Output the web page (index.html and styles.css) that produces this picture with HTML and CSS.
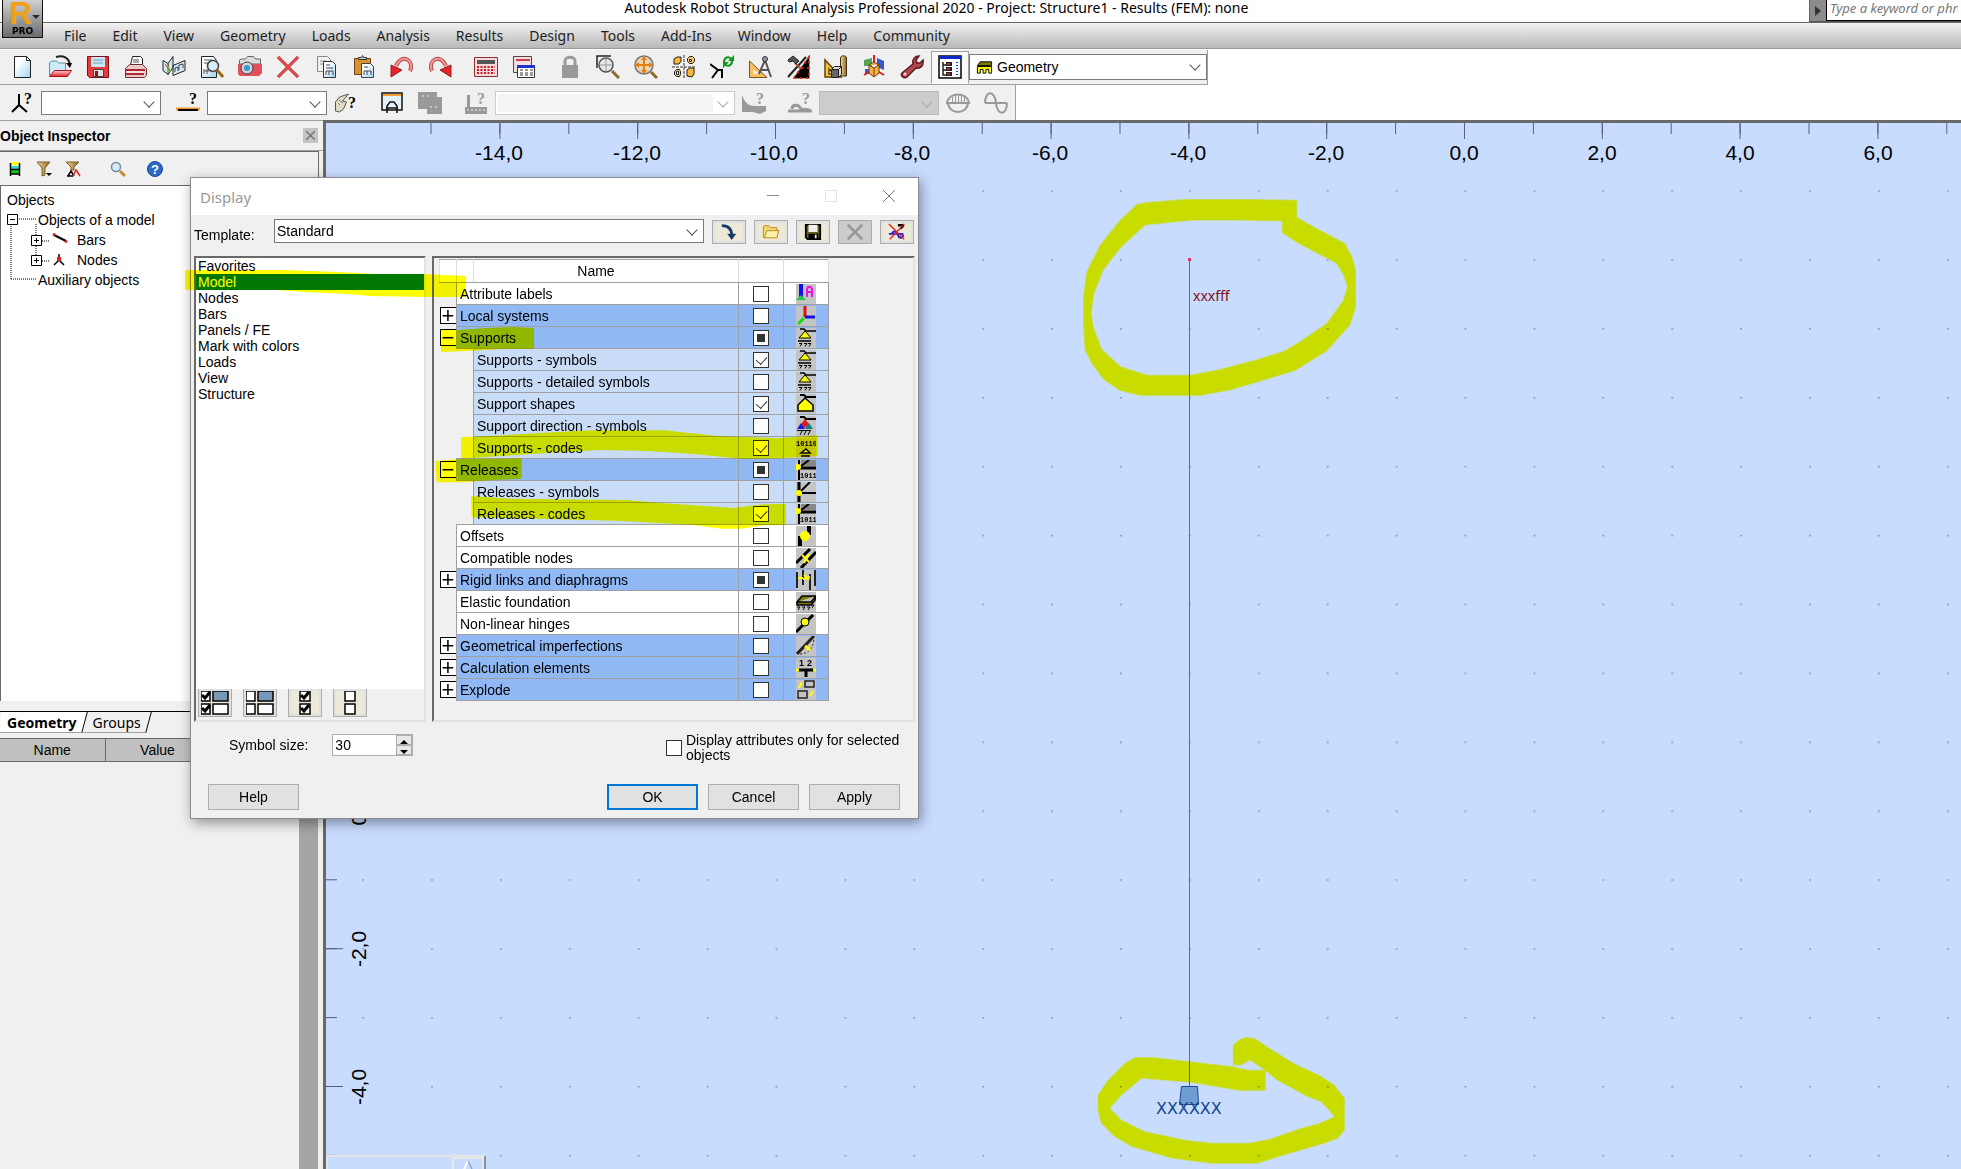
FILE: index.html
```html
<!DOCTYPE html>
<html lang="en">
<head>
  <meta charset="UTF-8">
  <meta name="viewport" content="width=device-width, initial-scale=1.0">
  <title>Autodesk Robot Structural Analysis Professional 2020</title>
  <link rel="stylesheet" href="styles.css">
</head>
<body>
  <svg class="sprite" aria-hidden="true">
    <defs>
      <linearGradient id="paper" x1="0" y1="0" x2="1" y2="1"><stop offset="0.3" stop-color="#fff"/><stop offset="1" stop-color="#9fd4f2"/></linearGradient>
      <linearGradient id="red" x1="0" y1="0" x2="0" y2="1"><stop offset="0" stop-color="#ffd0d0"/><stop offset="1" stop-color="#e02028"/></linearGradient>
      <linearGradient id="wood" x1="0" y1="0" x2="1" y2="0"><stop offset="0" stop-color="#f3dba0"/><stop offset="1" stop-color="#8a6420"/></linearGradient>
    </defs>
    <symbol id="support" viewBox="0 0 20 20">
      <path fill="#c4c4c4" d="M0 0h20v20H0z"/><path fill="none" stroke="#000" stroke-width="1.500" d="M4 1h4l2 2h10"/>
      <path fill="#ff0" stroke="#000" d="M9 3l6 7H3z"/><path stroke="#000" stroke-width="1.500" d="M2 13h13"/>
      <path fill="none" stroke="#000" d="M3 15.500h3l-2 3M8 15.500h3l-2 3M12 15.500h3l-2 3"/>
    </symbol>
    <symbol id="release" viewBox="0 0 20 20">
      <path fill="#c4c4c4" d="M0 0h20v20H0z"/><path stroke="#000" stroke-width="3" d="M3 0v20"/>
      <path stroke="#000" stroke-width="2" d="M4 11h16M4 10L14 0"/><circle cx="3" cy="11" r="3" fill="#ff0"/>
    </symbol>
    <symbol id="release-code" viewBox="0 0 20 20">
      <path fill="#c4c4c4" d="M0 0h20v20H0z"/><path fill="#888" d="M5 0h15v6H5z"/><path stroke="#000" stroke-width="2" d="M3 0v20M4 7L13 0"/><path stroke="#000" stroke-width="3" d="M4 8h16"/>
      <circle cx="2" cy="7" r="3" fill="#ff0"/><text x="4" y="18" class="icon-code">1011</text>
    </symbol>
  </svg>

  <div class="app">
    <header class="titlebar">
      <h1>Autodesk Robot Structural Analysis Professional 2020 - Project: Structure1 - Results (FEM): none</h1>
      <div class="search">
        <button class="search-toggle" aria-label="Collapse search"><svg width="6" height="10"><path d="M0 0l6 5-6 5z" fill="#333"/></svg></button>
        <input type="text" aria-label="Search" placeholder="Type a keyword or phrase">
      </div>
      <button class="app-button" aria-label="Application menu">
        <span class="app-letter">R</span>
        <svg width="8" height="4"><path d="M0 0h8L4 4z" fill="#222c38"/></svg>
        <span class="app-edition">PRO</span>
      </button>
    </header>

    <nav class="menubar">
      <a href="#">File</a><a href="#">Edit</a><a href="#">View</a><a href="#">Geometry</a><a href="#">Loads</a><a href="#">Analysis</a><a href="#">Results</a><a href="#">Design</a><a href="#">Tools</a><a href="#">Add-Ins</a><a href="#">Window</a><a href="#">Help</a><a href="#">Community</a>
    </nav>

    <div class="toolbars">
      <div class="toolbar">
        <button class="tool" aria-label="New"><svg viewBox="0 0 24 24"><path fill="url(#paper)" stroke="#222" d="M4.500 1.500h12l4 4v17h-16zM16.500 1.500v4h4"/></svg></button>
        <button class="tool" aria-label="Open"><svg viewBox="0 0 24 24"><path fill="#cfeaf8" stroke="#5590b0" d="M1.500 20V8l2-2h5l2 2h7v12z"/><path fill="url(#red)" stroke="#b01018" d="M1.500 21.500l5-6h17l-4 6z"/><path fill="none" stroke="#222" stroke-width="2" d="M8 2c7-2 12 0 14 7"/><path d="M18 8h6l-2 5z"/></svg></button>
        <button class="tool" aria-label="Save"><svg viewBox="0 0 24 24"><path fill="#e83840" stroke="#801018" d="M1.500 1.500h21v21h-19l-2-2z"/><path fill="#c8e8f4" d="M5 2h14v10H5z"/><path stroke="#68a0b0" d="M7 5h10M7 8h10"/><path fill="#ddd" stroke="#444" d="M7.500 14.500h10v7h-10z"/><path fill="#702020" d="M9 16h3v5H9z"/></svg></button>
        <button class="tool" aria-label="Print"><svg viewBox="0 0 24 24"><path fill="#fff" stroke="#222" d="M6.500 10l2-8.500h8l2 2V10z"/><path stroke="#555" d="M9 5h6M9 7h6"/><path fill="#e8c8c8" stroke="#703030" d="M1.500 13.500l4-4h13l4 4v7l-2 2h-19z"/><path stroke="#b02830" stroke-width="2" d="M2 15h19M2 19h18"/><path stroke="#fff" d="M3 17h16"/></svg></button>
        <button class="tool" aria-label="Preview"><svg viewBox="0 0 24 24"><path fill="#d4e8f4" stroke="#222" d="M1 5.500l5 3v11l-5-4zM6 8.500l5-7v11l-5 7zM11 20.500l12-5v-10l-12 5z"/><path fill="#70c840" d="M5 8l4 8-4 3z"/><path stroke="#e04040" d="M3 9l5 7"/><path fill="none" stroke="#345" d="M13 17v-4l3-1v4M17 15v-5l4-1v4"/></svg></button>
        <button class="tool" aria-label="Print composition"><svg viewBox="0 0 24 24"><path fill="url(#paper)" stroke="#222" d="M1.500 1.500h12l3 4v17h-15z"/><path stroke="#555" d="M4 5h8M4 8h5M4 14v5M7 14v5M4 16h5"/><circle cx="13" cy="11" r="5.500" fill="#d8eef8" stroke="#444" stroke-width="1.500"/><path stroke="#a06820" stroke-width="3" d="M17 15l6 7"/></svg></button>
        <button class="tool" aria-label="Screen capture"><svg viewBox="0 0 24 24"><path fill="#ddd" stroke="#666" d="M3.500 4h4l2-2.500h6l2 2.500h5v5h-21V5z"/><path fill="#e05058" d="M0 9h24v9l-3 3H2l-2-2z"/><circle cx="9" cy="13" r="6" fill="#d0d4d8" stroke="#444"/><circle cx="9" cy="13" r="3" fill="#3898d0"/></svg></button>
        <button class="tool" aria-label="Delete"><svg viewBox="0 0 24 24"><path stroke="#902020" stroke-width="3" d="M2 2l20 20M22 2L2 22"/><path stroke="#f04848" stroke-width="2" d="M2 2l20 20M22 2L2 22"/></svg></button>
        <button class="tool" aria-label="Copy"><svg viewBox="0 0 24 24"><path fill="#f0f0f0" stroke="#888" d="M3.500 1.500h10l3 3v12h-13zM6 6h6M6 9h6"/><path fill="url(#paper)" stroke="#333" d="M9.500 6.500h9l3 3v13h-12z"/><path fill="none" stroke="#445" d="M12 10h4M12 13h7M12 20v-4h7v4M15 16v4"/></svg></button>
        <button class="tool" aria-label="Paste"><svg viewBox="0 0 24 24"><path fill="#d89030" stroke="#704010" d="M2.500 3.500h16v16h-16z"/><path fill="#ccc" stroke="#333" d="M6.500 4.500v-2h3l1-2 1 2h3v2z"/><path fill="url(#paper)" stroke="#444" d="M9.500 8.500h9l3 3v11h-12z"/><path fill="none" stroke="#445" d="M12 12h4M12 20v-4h7v4M15 16v4"/></svg></button>
        <button class="tool" aria-label="Undo"><svg viewBox="0 0 24 24"><path fill="none" stroke="#a05050" stroke-width="4" d="M20 16c5-10-8-19-14-5"/><path fill="none" stroke="#ff9090" stroke-width="2" d="M20 16c5-10-8-19-14-5"/><path fill="#e82028" stroke="#902020" d="M1 10l11 5-11 7z"/></svg></button>
        <button class="tool" aria-label="Redo"><svg viewBox="0 0 24 24"><path fill="none" stroke="#a05050" stroke-width="4" d="M4 16c-5-10 8-19 14-5"/><path fill="none" stroke="#ff9090" stroke-width="2" d="M4 16c-5-10 8-19 14-5"/><path fill="#e82028" stroke="#902020" d="M23 10l-11 5 11 7z"/></svg></button>
        <button class="tool gap" aria-label="Calculate"><svg viewBox="0 0 24 24"><path fill="#f8d8d8" stroke="#903030" d="M.500 2.500h23v19H.500z"/><path fill="#555" d="M3 5h18v4H3z"/><path stroke="#c02028" stroke-width="2" stroke-dasharray="2 1.500" d="M3 12h18M3 15h18M3 18h18"/></svg></button>
        <button class="tool" aria-label="Calculation report"><svg viewBox="0 0 24 24"><path fill="#f0e0e0" stroke="#604040" d="M1.500 1.500h18v16h-18z"/><path fill="#d04048" d="M4 4h14v2H4z"/><path fill="#fff" stroke="#333" d="M5.500 10.500h17v12h-17z"/><path fill="#2030d0" d="M5 10h18v3H5z"/><path stroke="#333" stroke-dasharray="3 2" d="M8 15h13M8 18h13M8 20h13"/></svg></button>
        <button class="tool gap" aria-label="Lock"><svg viewBox="0 0 24 24"><path fill="none" stroke="#999" stroke-width="3" d="M7 12V6c0-5 10-5 10 0v6"/><path fill="#999" d="M4 10h16v13H4z"/></svg></button>
        <button class="tool" aria-label="Zoom window"><svg viewBox="0 0 24 24"><path fill="none" stroke="#222" stroke-width="1.500" d="M1 13V1h14"/><circle cx="10" cy="10" r="7" fill="#e4e8ea" stroke="#555" stroke-width="1.500"/><path stroke="#999" d="M10 4v12M4 10h12"/><path stroke="#906828" stroke-width="3" d="M16 16l7 7"/></svg></button>
        <button class="tool" aria-label="Zoom all"><svg viewBox="0 0 24 24"><circle cx="10" cy="10" r="9" fill="#e8d8b8" stroke="#777" stroke-width="1.500"/><path stroke="#e88010" stroke-width="2" d="M10 2v16M2 10h16"/><path fill="#e88010" d="M10 1l3 4H7zM10 19l3-4H7zM1 10l4-3v6zM19 10l-4-3v6z"/><path stroke="#906828" stroke-width="3" d="M17 17l6 6"/></svg></button>
        <button class="tool" aria-label="View manager"><svg viewBox="0 0 24 24"><path stroke="#333" stroke-dasharray="3 1" d="M12 0v24M0 12h24"/><path fill="#f8b838" stroke="#222" d="M2 9V4l3-2h4v4L7 9zM15 21v-6l3-2h4v6l-2 3z"/><path fill="#f8c868" stroke="#222" d="M15.500 3.500l2-2h3l2 2v3l-2 2h-3l-2-2zM2.500 16.500l2-2h3l1 2v3l-1 2h-3l-2-2z"/><path fill="#fff" stroke="#222" d="M17.500 4.500h2v2h-2zM4.500 16.500h2v3h-2z"/></svg></button>
        <button class="tool" aria-label="Refresh view"><svg viewBox="0 0 24 24"><path fill="none" stroke="#000" stroke-width="2" d="M0 9l8 6h5M8 15L2 23M12 15v8"/><path fill="none" stroke="#109820" stroke-width="2" d="M14 7c0-5 5-6 7-3M22 6c0 5-5 6-7 3"/><path fill="#109820" d="M24 0v6h-6zM13 13V7h6z"/></svg></button>
        <button class="tool" aria-label="Dimension"><svg viewBox="0 0 24 24"><path fill="#f8c060" stroke="#805020" d="M1.500 6v16.500H19z"/><path fill="#eee" d="M5 14v5h6z"/><path fill="none" stroke="#555" stroke-width="2" d="M17 5l-6 14M17 5l6 17M12 15h9"/><circle cx="17" cy="4" r="2.500" fill="#999" stroke="#333"/></svg></button>
        <button class="tool" aria-label="Edit structure"><svg viewBox="0 0 24 24"><path fill="#fff" stroke="#a08050" stroke-width="1.500" d="M8 23L23 2v21zM15 13h8M15 13v10"/><path stroke="#e02020" stroke-width="2" stroke-dasharray="2 4" d="M8 23L23 2v21H8M15 13h8"/><path stroke="#222" stroke-width="2" d="M2 22L20 2"/><path stroke="#b05030" stroke-width="2" d="M9 8l6 6"/><path fill="#555" stroke="#222" d="M2 5l5-4 6 5-3 3-3-3-4 1z"/></svg></button>
        <button class="tool" aria-label="Section database"><svg viewBox="0 0 24 24"><path fill="#f8c838" stroke="#604010" stroke-width="1.500" d="M1 5v17h16zM5 14l5 5H5z"/><path fill="url(#wood)" stroke="#443010" d="M16.500 3v18h6V3c0-3-6-3-6 0z"/><path fill="#ddd" stroke="#222" d="M7.500 14.500h7v8h-7zM7.500 14.500l3-3h7v8l-3 3M14.500 14.500l3-3"/><path fill="#666" d="M8 15h6v7H8z"/></svg></button>
        <button class="tool" aria-label="Attributes"><svg viewBox="0 0 24 24"><path fill="#58a058" d="M2 5l8-2v8H2z"/><path fill="#3858c8" d="M15 3l7 3v9l-7-3zM3 14h6v5H3z"/><path stroke="#e02020" stroke-width="2" d="M12 0v10M2 20l10-6M22 20l-10-6"/><path fill="#f8b040" stroke="#704010" d="M7 10l5-3 5 3v8l-5 4-5-4zM7 10l5 3 5-3M12 13v9"/></svg></button>
        <button class="tool" aria-label="Preferences"><svg viewBox="0 0 24 24"><path fill="#b04850" stroke="#601820" stroke-width="1.500" d="M2 18L13 9c-1-5 2-8 6-8l-3 4 1 3h3l3-3c1 6-3 9-7 8L7 22c-3 2-7-1-5-4z"/><circle cx="5" cy="19" r="1.500" fill="#f4d8d8"/></svg></button>
        <button class="tool active" aria-label="Object inspector"><svg viewBox="0 0 24 24"><path fill="#fff" stroke="#000" stroke-width="1.500" d="M1 1h22v22H1z"/><path fill="#1028c8" d="M1 1h22v3H1z"/><path fill="none" stroke="#222" stroke-width="1.500" d="M5 7v13h5M5 10h6M5 15h6"/><path stroke="#222" stroke-width="4" d="M8 9h6M8 14h6M8 19h6"/><path stroke="#d02020" stroke-width="2" d="M9 9h3M9 14h3M9 19h3"/><path stroke="#2038c8" stroke-width="2" stroke-dasharray="1 2" d="M19 7v15"/></svg></button>
        <span class="combo layout-combo">
          <svg viewBox="0 0 18 18"><path fill="#807800" stroke="#000" d="M1.500 7.500l3-4h12v4z"/><path fill="#ff0" stroke="#000" d="M1.500 8.500h15v7h-3v-4h-3v4h-3v-4h-3v4h-3z"/></svg>
          <select aria-label="Layout"><option>Geometry</option></select>
        </span>
      </div>

      <div class="toolbar second">
        <button class="tool" aria-label="Select nodes"><svg viewBox="0 0 24 24"><path fill="none" stroke="#000" stroke-width="2" d="M9 3v11L2 21M9 14l8 7"/><text x="14" y="13" class="icon-mark">?</text></svg></button>
        <span class="combo"><select aria-label="Node selection"><option></option></select></span>
        <button class="tool gap" aria-label="Select bars"><svg viewBox="0 0 24 24"><path stroke="#f89828" stroke-width="3" d="M0 18h24"/><path stroke="#000" stroke-width="2" d="M2 19h20"/><text x="13" y="13" class="icon-mark">?</text></svg></button>
        <span class="combo"><select aria-label="Bar selection"><option></option></select></span>
        <button class="tool" aria-label="Select objects"><svg viewBox="0 0 24 24"><path fill="#e0dcc8" stroke="#555" d="M1.500 20V11l4-5 9-3-6 7 4 1-3 7-4 3z"/><path stroke="#777" d="M4 12l2 2M5 9l4 3"/><text x="14" y="17" class="icon-mark">?</text></svg></button>
        <button class="tool gap" aria-label="Edit in window"><svg viewBox="0 0 24 24"><path fill="#e4f2fa" stroke="#111" stroke-width="1.500" d="M2 2h20v17H2z"/><path fill="#f8a030" d="M3 3h18v2H3z"/><path fill="none" stroke="#111" stroke-width="1.500" d="M7 22v-7l3-4h4l3 4v7M6 17h12"/></svg></button>
        <button class="tool" aria-label="Load types" disabled><svg viewBox="0 0 24 24"><path fill="#999" d="M0 1h19v5h5v17H9v-5H0z"/><path stroke="#eee" stroke-dasharray="2 3" d="M4 5h9M12 16h8"/></svg></button>
        <button class="tool gap" aria-label="Select case" disabled><svg viewBox="0 0 24 24"><path fill="#999" d="M3 4h3v12h17v7H1v-7h2z"/><path stroke="#eee" stroke-dasharray="2 2" d="M3 19h18"/><text x="13" y="13" class="icon-mark off">?</text></svg></button>
        <span class="combo wide"><select aria-label="Load case" disabled><option></option></select></span>
        <button class="tool" aria-label="Select mode" disabled><svg viewBox="0 0 24 24"><path fill="#999" d="M0 4c3 8 6 11 14 11h10v5l-6 3-7-2H0z"/><text x="14" y="13" class="icon-mark off">?</text></svg></button>
        <button class="tool gap" aria-label="Select component" disabled><svg viewBox="0 0 24 24"><path fill="none" stroke="#999" stroke-width="3" d="M0 20h24M4 18c0-5 7-5 9 0l9 1"/><text x="14" y="13" class="icon-mark off">?</text></svg></button>
        <span class="combo filled"><select aria-label="Mode" disabled><option></option></select></span>
        <button class="tool" aria-label="Diagram" disabled><svg viewBox="0 0 24 24"><path fill="none" stroke="#999" stroke-width="2" d="M1 11C4 1 20 1 23 11M0 12h24M2 12c1 12 19 12 20 0"/><path fill="none" stroke="#999" d="M6.500 6v6M9.500 4v8M12.500 4v8M15.500 4v8M18.500 6v6"/></svg></button>
        <button class="tool" aria-label="Wave" disabled><svg viewBox="0 0 24 24"><path fill="none" stroke="#999" stroke-width="2" d="M1 12h22M1 12c0-13 10-13 11 0s11 13 11 0"/></svg></button>
      </div>
    </div>

    <main class="workspace">
      <aside class="inspector">
        <div class="inspector-head">
          <h2>Object Inspector</h2>
          <button class="close" aria-label="Close inspector"><svg width="9" height="9"><path stroke="#777" stroke-width="1.500" d="M0 0l9 9M9 0L0 9"/></svg></button>
        </div>
        <div class="inspector-tools">
          <button aria-label="Storeys"><svg viewBox="0 0 16 16"><path fill="#ff0" d="M4 1h8v3H4z"/><path fill="#30d8d0" d="M4 5h8v3H4z"/><path fill="#10c820" d="M4 9h8v4H4z"/><path fill="none" stroke="#000" stroke-width="1.500" d="M3.500 15V2M12.500 15V2M3 8.500h10M3 13h10"/></svg></button>
          <button aria-label="Filter"><svg viewBox="0 0 16 16"><path fill="url(#wood)" stroke="#806020" d="M1 1h13L9 7v7l-3 1V7z"/><path d="M10 12h6l-3 3z"/></svg></button>
          <button aria-label="Filter structure"><svg viewBox="0 0 16 16"><path fill="url(#wood)" stroke="#806020" d="M1 1h13L9 6v3H6V6z"/><path fill="none" stroke="#000" stroke-width="1.500" d="M2 15h6M3 15l3-5 3 5"/><path fill="none" stroke="#e82020" stroke-width="1.500" d="M8 15l3-6 4 6"/></svg></button>
          <button class="find" aria-label="Find"><svg viewBox="0 0 16 16"><circle cx="6" cy="6" r="4.500" fill="#d8ecf8" stroke="#7088a8" stroke-width="1.500"/><path stroke="#c09030" stroke-width="3" d="M10 10l5 5"/></svg></button>
          <button class="help" aria-label="Help"><svg viewBox="0 0 16 16"><circle cx="8" cy="8" r="7.500" fill="#2c68c8" stroke="#184890"/><text x="8" y="13" text-anchor="middle" class="icon-help">?</text></svg></button>
        </div>
        <div class="tree">
          <p>Objects</p>
          <svg class="tree-lines" width="70" height="90">
            <path class="dots" d="M15 15h21M11 20v55M11 75h25M36 20v35M42 37h8M42 57h8"/>
            <path class="box" d="M7.500 10.500h10v10h-10zM31.500 31.500h10v10h-10zM31.500 51.500h10v10h-10z"/>
            <path class="sign" d="M10 15.500h5M34 36.500h5M36.500 34v5M34 56.500h5M36.500 54v5"/>
            <path stroke="#000" stroke-width="2" d="M54 31l12 6"/><path stroke="#e02020" stroke-width="3" d="M53 30l2 1M65 37l2 1"/>
            <path fill="none" stroke="#000" stroke-width="1.500" d="M59 50v6l-5 5M59 56l5 5"/><path fill="#e02020" d="M57 53h4v4h-4z"/>
          </svg>
          <ul>
            <li>Objects of a model
              <ul><li>Bars</li><li>Nodes</li></ul>
            </li>
            <li>Auxiliary objects</li>
          </ul>
        </div>
        <div class="tabs">
          <button class="tab current">Geometry</button>
          <button class="tab">Groups</button>
        </div>
        <div class="properties">
          <table>
            <thead><tr><th>Name</th><th>Value</th><th></th></tr></thead>
          </table>
          <div class="side-strip"></div>
        </div>
      </aside>

      <section class="viewport">
        <svg class="canvas" width="100%" height="100%">
          <defs>
            <pattern id="grid" patternUnits="userSpaceOnUse" x="1464.500" y="1086" width="68.900" height="68.900"><path fill="#9090ec" d="M0 0h2v1.500H0z"/></pattern>
            <pattern id="minor" patternUnits="userSpaceOnUse" x="1464" y="123" width="68.900" height="20"><path fill="#56607a" d="M0 0h1v11H0z"/></pattern>
            <pattern id="major" patternUnits="userSpaceOnUse" x="1464" y="123" width="137.800" height="20"><path fill="#56607a" d="M0 0h1v16H0z"/></pattern>
            <pattern id="minor-y" patternUnits="userSpaceOnUse" x="326" y="1086" width="20" height="68.900"><path fill="#56607a" d="M0 0h11v1H0z"/></pattern>
            <pattern id="major-y" patternUnits="userSpaceOnUse" x="326" y="1086" width="20" height="137.800"><path fill="#56607a" d="M0 0h17v1H0z"/></pattern>
          </defs>
          <g transform="translate(-326 -123)">
            <rect x="326" y="180" width="4000" height="3000" fill="url(#grid)"/>
            <rect x="400" y="123" width="4000" height="20" fill="url(#minor)"/>
            <rect x="400" y="123" width="4000" height="20" fill="url(#major)"/>
            <rect x="326" y="820" width="20" height="340" fill="url(#minor-y)"/>
            <rect x="326" y="820" width="20" height="340" fill="url(#major-y)"/>
            <g class="ruler">
              <text x="499" y="160">-14,0</text><text x="637" y="160">-12,0</text><text x="774" y="160">-10,0</text><text x="912" y="160">-8,0</text><text x="1050" y="160">-6,0</text><text x="1188" y="160">-4,0</text><text x="1326" y="160">-2,0</text><text x="1464" y="160">0,0</text><text x="1602" y="160">2,0</text><text x="1740" y="160">4,0</text><text x="1878" y="160">6,0</text>
              <text transform="translate(366 811) rotate(-90)">0,0</text>
              <text transform="translate(366 949) rotate(-90)">-2,0</text>
              <text transform="translate(366 1087) rotate(-90)">-4,0</text>
            </g>
            <path fill="#709cd4" stroke="#1c4890" d="M1181.500 1086.500h16l1 18h-19z"/>
            <path stroke="#66707c" d="M1189.500 260v826"/>
            <path fill="#e03070" d="M1188 258h3v3h-3z"/>
            <text class="free-code" x="1193" y="301">xxxfff</text>
            <text class="support-code" x="1156" y="1114">XXXXXX</text>
            <g class="marker">
              <path transform="translate(1060 180) scale(.3333)" d="M230 73L260 67 370 58H567L711 60V112L760 140 855 190 878 235 888 275V380L870 435 800 513 705 572 590 607 510 630 420 647H240L180 632 130 598 95 550 75 510 70 440V350L80 275 120 195 180 120zM255 135L395 121H543L666 123V158L710 187 760 214 830 250 850 285 862 320 850 360 800 430 720 485 670 514 590 539 480 568 390 585H262L182 560 125 508 100 440 94 400 102 340 130 270 180 205z"/>
              <path transform="translate(300 1020) scale(.6761 .3333)" d="M1380 135V75L1390 58 1400 52 1412 55 1430 80 1470 130 1510 168 1530 195 1545 235V330L1535 355 1515 370 1460 402 1415 431H1350L1290 415 1230 380 1205 350 1185 310 1180 270V225L1195 180 1220 130 1235 112H1263L1310 123 1380 140 1403 150H1427L1405 120 1392 135zM1245 175L1320 188 1390 212H1428V152L1445 180 1490 230 1510 245 1522 270 1530 290 1508 310 1480 325 1433 358 1403 369H1350L1310 360 1250 335 1215 300 1198 265 1215 225z"/>
            </g>
          </g>
        </svg>
        <div class="corner-panel"><button aria-label="Expand"><svg width="20" height="16"><path fill="none" stroke="#fff" stroke-width="2" d="M3 16L10 2"/><path fill="none" stroke="#7888a8" d="M10 2l7 14"/></svg></button></div>
      </section>
    </main>

    <div class="dialog" role="dialog" aria-labelledby="dialog-title">
      <div class="dialog-head">
        <h2 id="dialog-title">Display</h2>
        <button aria-label="Minimize"><svg width="12" height="12"><path stroke="#888" d="M0 5.500h12"/></svg></button>
        <button aria-label="Maximize" disabled><svg width="12" height="12"><path fill="none" stroke="#e4e4e4" d="M.500.500h11v11H.500z"/></svg></button>
        <button aria-label="Close"><svg width="12" height="12"><path stroke="#777" d="M0 0l12 12M12 0L0 12"/></svg></button>
      </div>

      <div class="template-row">
        <label for="template">Template:</label>
        <span class="combo"><select id="template"><option>Standard</option></select></span>
        <button class="icon-button" aria-label="Apply template"><svg viewBox="0 0 20 20"><path fill="none" stroke="#183868" stroke-width="3" d="M2 3c8 0 11 4 11 11"/><path fill="#183868" d="M8 12h10l-5 7z"/></svg></button>
        <button class="icon-button" aria-label="Open template"><svg viewBox="0 0 20 20"><path fill="#f4d470" stroke="#b88820" d="M1.500 16V4l1-1h5l2 2h7v3h2l-2 8z"/><path fill="#fff0a8" stroke="#b88820" d="M2.500 16.500l3-8h13l-2 8z"/></svg></button>
        <button class="icon-button" aria-label="Save template"><svg viewBox="0 0 20 20"><path fill="#686018" stroke="#000" stroke-width="2" d="M2 2h16v16H4l-2-2z"/><path fill="#f0f0f0" d="M5 2h10v8H5z"/><path d="M5 12h11v6H5z"/><path fill="#eee" d="M12 13h2v4h-2z"/></svg></button>
        <button class="icon-button" aria-label="Delete template" disabled><svg viewBox="0 0 20 20"><path stroke="#999" stroke-width="3" d="M2 2l16 16M18 2L2 18"/></svg></button>
        <button class="icon-button" aria-label="Clear display"><svg viewBox="0 0 20 20"><path d="M11 1h7v3l-3 3h-2l2-3h-4z"/><path fill="none" stroke="#2020d8" stroke-width="2" d="M1 12h16M4 12c2-4 6-3 7 1s5 5 6 0"/><path stroke="#e82020" stroke-width="1.500" d="M1 1l17 17M18 1L2 18"/></svg></button>
      </div>

      <div class="panes">
        <div class="pane list-pane">
          <ul class="categories">
            <li>Favorites</li><li class="selected">Model</li><li>Nodes</li><li>Bars</li><li>Panels / FE</li><li>Mark with colors</li><li>Loads</li><li>View</li><li>Structure</li>
          </ul>
          <div class="list-buttons">
            <button class="icon-button" aria-label="Select group"><svg viewBox="0 0 28 24"><path fill="#7898b8" stroke="#000" stroke-width="1.500" d="M12 0h15v10H12z"/><path fill="#fff" stroke="#000" stroke-width="1.500" d="M0 0h9v10H0zM0 13h9v10H0zM12 13h15v10H12z"/><path fill="none" stroke="#000" stroke-width="3" d="M1 4l3 3 5-6M1 17l3 3 5-6"/></svg></button>
            <button class="icon-button" aria-label="Clear group"><svg viewBox="0 0 28 24"><path fill="#7898b8" stroke="#000" stroke-width="1.500" d="M12 0h15v10H12z"/><path fill="#fff" stroke="#000" stroke-width="1.500" d="M0 0h9v10H0zM0 13h9v10H0zM12 13h15v10H12z"/></svg></button>
            <button class="icon-button" aria-label="Select all"><svg viewBox="0 0 28 24"><path fill="#fff" stroke="#000" stroke-width="1.500" d="M9 0h10v10H9zM9 13h10v10H9z"/><path fill="none" stroke="#000" stroke-width="3" d="M10 4l3 3 5-6M10 17l3 3 5-6"/></svg></button>
            <button class="icon-button" aria-label="Clear all"><svg viewBox="0 0 28 24"><path fill="#fff" stroke="#000" stroke-width="1.500" d="M9 0h10v10H9zM9 13h10v10H9z"/></svg></button>
          </div>
        </div>

        <div class="pane table-pane">
          <table class="attributes">
            <colgroup><col class="c-box"><col class="c-box"><col class="c-name"><col class="c-check"><col class="c-check"></colgroup>
            <thead><tr><th></th><th></th><th>Name</th><th></th><th></th></tr></thead>
            <tbody>
              <tr><td></td><td colspan="2">Attribute labels</td><td><input type="checkbox" aria-label="Attribute labels"></td><td><svg viewBox="0 0 20 20"><path fill="#c4c4c4" d="M0 0h20v20H0z"/><path stroke="#1010e8" stroke-width="4" d="M5 0v13"/><path fill="#20c840" d="M5 11l5 5H0z"/><path fill="none" stroke="#f010e8" stroke-width="2" d="M11 13V5l1-2h3l1 2v8M11 8h5"/></svg></td></tr>
              <tr class="parent"><td><button class="expander">+</button></td><td colspan="2">Local systems</td><td><input type="checkbox" aria-label="Local systems"></td><td><svg viewBox="0 0 20 20"><path fill="#c4c4c4" d="M0 0h20v20H0z"/><path stroke="#e01010" stroke-width="3" d="M9 0v11"/><path stroke="#1010e0" stroke-width="3" d="M9 11h10"/><path stroke="#10e010" stroke-width="3" d="M8 12l-6 6"/></svg></td></tr>
              <tr class="parent"><td><button class="expander">−</button></td><td colspan="2">Supports</td><td><input type="checkbox" class="partial" aria-label="Supports"></td><td><svg><use href="#support"/></svg></td></tr>
              <tr class="child"><td></td><td></td><td>Supports - symbols</td><td><input type="checkbox" checked aria-label="Supports - symbols"></td><td><svg><use href="#support"/></svg></td></tr>
              <tr class="child"><td></td><td></td><td>Supports - detailed symbols</td><td><input type="checkbox" aria-label="Supports - detailed symbols"></td><td><svg><use href="#support"/></svg></td></tr>
              <tr class="child"><td></td><td></td><td>Support shapes</td><td><input type="checkbox" checked aria-label="Support shapes"></td><td><svg viewBox="0 0 20 20"><path fill="#c4c4c4" d="M0 0h20v20H0z"/><path fill="none" stroke="#000" stroke-width="2" d="M4 1h4l2 2h10"/><path fill="#ff0" stroke="#000" stroke-width="1.500" d="M9 4l8 7v6H2v-6z"/></svg></td></tr>
              <tr class="child"><td></td><td></td><td>Support direction - symbols</td><td><input type="checkbox" aria-label="Support direction - symbols"></td><td><svg viewBox="0 0 20 20"><path fill="#c4c4c4" d="M0 0h20v20H0z"/><path fill="none" stroke="#000" stroke-width="2" d="M4 1h4l2 2h10"/><path fill="#e01818" d="M9 3l4 5-4 4-4-4z"/><path fill="#1818e0" d="M5 7l4 6H1z"/><path fill="#108080" d="M13 7l4 6H9z"/><path fill="none" stroke="#000" d="M1 14.500h14M6 15l-2 4M10 15l-2 4M14 15l-2 4"/></svg></td></tr>
              <tr class="child"><td></td><td></td><td>Supports - codes</td><td><input type="checkbox" checked aria-label="Supports - codes"></td><td><svg viewBox="0 0 20 20"><path fill="#c4c4c4" d="M0 0h20v20H0z"/><text x="0" y="8" class="icon-code">10110</text><path fill="#ff0" stroke="#000" stroke-width="1.500" d="M10 11l4 4H5zM5 18h9"/></svg></td></tr>
              <tr class="parent"><td><button class="expander">−</button></td><td colspan="2">Releases</td><td><input type="checkbox" class="partial" aria-label="Releases"></td><td><svg><use href="#release-code"/></svg></td></tr>
              <tr class="child"><td></td><td></td><td>Releases - symbols</td><td><input type="checkbox" aria-label="Releases - symbols"></td><td><svg><use href="#release"/></svg></td></tr>
              <tr class="child"><td></td><td></td><td>Releases - codes</td><td><input type="checkbox" checked aria-label="Releases - codes"></td><td><svg><use href="#release-code"/></svg></td></tr>
              <tr><td></td><td colspan="2">Offsets</td><td><input type="checkbox" aria-label="Offsets"></td><td><svg viewBox="0 0 20 20"><path fill="#c4c4c4" d="M0 0h20v20H0z"/><path stroke="#000" stroke-width="4" d="M4 20V10M13 9V0"/><circle cx="9" cy="10" r="5" fill="#ff0"/></svg></td></tr>
              <tr><td></td><td colspan="2">Compatible nodes</td><td><input type="checkbox" aria-label="Compatible nodes"></td><td><svg viewBox="0 0 20 20"><path fill="#c4c4c4" d="M0 0h20v20H0z"/><path stroke="#000" stroke-width="3" d="M0 15L14 1M5 20L20 4"/><path fill="none" stroke="#ff0" stroke-width="2" d="M6 7l7 7M13 6l-5 9"/></svg></td></tr>
              <tr class="parent"><td><button class="expander">+</button></td><td colspan="2">Rigid links and diaphragms</td><td><input type="checkbox" class="partial" aria-label="Rigid links and diaphragms"></td><td><svg viewBox="0 0 20 20"><path fill="#c4c4c4" d="M0 0h20v20H0z"/><path stroke="#222" stroke-width="2" d="M1 2v16M7 0v15M14 4v16M19 0v16"/><path fill="none" stroke="#ff0" stroke-width="2" d="M2 8h5M7 9l7-2M8 5l5 5"/></svg></td></tr>
              <tr><td></td><td colspan="2">Elastic foundation</td><td><input type="checkbox" aria-label="Elastic foundation"></td><td><svg viewBox="0 0 20 20"><path fill="#c4c4c4" d="M0 0h20v20H0z"/><path fill="#807800" stroke="#000" stroke-width="1.500" d="M1 10l5-6h14l-5 6zM1 10v3h14l5-6V4"/><path fill="none" stroke="#000" d="M1 15h3l-2 3M6 15h3l-2 3M11 15h3l-2 3M15 13h3l-2 3"/></svg></td></tr>
              <tr><td></td><td colspan="2">Non-linear hinges</td><td><input type="checkbox" aria-label="Non-linear hinges"></td><td><svg viewBox="0 0 20 20"><path fill="#c4c4c4" d="M0 0h20v20H0z"/><path stroke="#000" stroke-width="3" d="M0 18L17 1"/><circle cx="9" cy="8" r="4" fill="#ff0" stroke="#000"/></svg></td></tr>
              <tr class="parent"><td><button class="expander">+</button></td><td colspan="2">Geometrical imperfections</td><td><input type="checkbox" aria-label="Geometrical imperfections"></td><td><svg viewBox="0 0 20 20"><path fill="#c4c4c4" d="M0 0h20v20H0z"/><path stroke="#222" stroke-width="3" d="M1 18L18 0"/><path fill="none" stroke="#222" stroke-dasharray="2 2" d="M4 18c9 0 14-7 14-16"/><path stroke="#ff0" stroke-width="3" d="M9 10l5 4"/></svg></td></tr>
              <tr class="parent"><td><button class="expander">+</button></td><td colspan="2">Calculation elements</td><td><input type="checkbox" aria-label="Calculation elements"></td><td><svg viewBox="0 0 20 20"><path fill="#c4c4c4" d="M0 0h20v20H0z"/><text x="3" y="8" class="icon-num">1</text><text x="11" y="8" class="icon-num">2</text><path stroke="#000" stroke-width="3" d="M2 12h16M10 12v7"/><path stroke="#ff0" stroke-width="3" d="M0 12h3M17 12h3"/></svg></td></tr>
              <tr class="parent"><td><button class="expander">+</button></td><td colspan="2">Explode</td><td><input type="checkbox" aria-label="Explode"></td><td><svg viewBox="0 0 20 20"><path fill="#c4c4c4" d="M0 0h20v20H0z"/><path fill="none" stroke="#222" stroke-width="1.500" d="M9 1h9v6H9zM2 11h9v7H2z"/><path fill="none" stroke="#ff0" stroke-width="2" d="M6 2L3 8M17 11l-3 5"/></svg></td></tr>
            </tbody>
          </table>
        </div>
      </div>

      <div class="options">
        <label for="symbol-size">Symbol size:</label>
        <span class="spinner">
          <input type="text" id="symbol-size" value="30">
          <span class="steps">
            <button aria-label="Increase"><svg width="8" height="4"><path d="M0 4h8L4 0z"/></svg></button>
            <button aria-label="Decrease"><svg width="8" height="4"><path d="M0 0h8L4 4z"/></svg></button>
          </span>
        </span>
        <label class="only-selected"><input type="checkbox"> <span>Display attributes only for selected objects</span></label>
      </div>

      <div class="actions">
        <button>Help</button>
        <button class="default">OK</button>
        <button>Cancel</button>
        <button>Apply</button>
      </div>

      <svg class="marker dialog-marker" width="728" height="641">
        <g transform="translate(-191 -178)">
          <path d="M185 270H285L337 272 377 274H425L466 276V297H430L370 296 350 294 303 292 277 290H185z"/>
          <path d="M440 330H456L487 328 513 327 534 328V349H503L465 351 441 352z"/>
          <path transform="translate(430 255) scale(.3333)" d="M93 547L185 543 340 533 480 526H705L770 533 860 543 1045 550 1163 541V603L1060 609 940 612 790 597 650 588 510 585 290 598 93 611z"/>
          <path transform="translate(430 255) scale(.3333)" d="M15 618L85 612 275 610V671L190 675 100 682H20z"/>
          <path transform="translate(430 480) scale(.3333)" d="M123 48L240 56 590 60 700 70 860 80 910 84 1000 73 1068 72V134L1000 136 935 146H875L790 135 560 122 125 112z"/>
        </g>
      </svg>
    </div>
  </div>
</body>
</html>
```

FILE: styles.css
```css
:root {
  --face: #f0f0f0;
  --line: #a0a0a0;
  --dark: #696969;
  --canvas: #c8dcff;
  --parent: #90b8f5;
  --child: #c8dcf8;
}
* {
  box-sizing: border-box;
  margin: 0;
  padding: 0;
}
body {
  font-family: "Liberation Sans", Arial, sans-serif;
  font-size: 14px;
  color: #000;
  background: #fff;
}
button, input, select {
  font: inherit;
  color: inherit;
  border-radius: 0;
}
button {
  border: none;
  background: none;
}
ul {
  list-style: none;
}
.sprite {
  position: absolute;
  width: 0;
  height: 0;
}
.app {
  position: relative;
  display: flex;
  flex-direction: column;
  height: 100vh;
  overflow: hidden;
}

/* title bar */
.titlebar {
  position: relative;
  display: flex;
  height: 23px;
  border-bottom: 1px solid #666;
}
.titlebar h1 {
  flex: 1;
  padding-left: 64px;
  text-align: center;
  font: 14px/16px "Noto Sans", sans-serif;
}
.search {
  display: flex;
  width: 152px;
  border-bottom: 1px solid #555;
  overflow: hidden;
}
.search-toggle {
  width: 17px;
  background: #8c8c8c;
  border-left: 1px solid #666;
}
.search input {
  flex: 1;
  min-width: 0;
  padding: 0 3px 5px;
  border: solid #000;
  border-width: 0 0 1px 1px;
  font: italic 13px/16px "Noto Sans", sans-serif;
}
.search input::placeholder {
  color: #777;
}
.app-button {
  position: absolute;
  left: 2px;
  top: 0;
  z-index: 2;
  width: 41px;
  height: 38px;
  border: 1px solid #111;
  border-top: none;
  background: linear-gradient(#d0d0d0, #6c6c6c);
  overflow: hidden;
}
.app-letter {
  position: absolute;
  left: 6px;
  top: 0;
  font: bold 32px/27px "Liberation Sans", sans-serif;
  color: #f0a018;
}
.app-button svg {
  position: absolute;
  right: 2px;
  top: 15px;
}
.app-edition {
  position: absolute;
  left: 0;
  right: 0;
  bottom: 1px;
  font: bold 9px/10px "DejaVu Sans", sans-serif;
}

/* menu */
.menubar {
  display: flex;
  gap: 26px;
  height: 26px;
  padding-left: 64px;
  border-bottom: 1px solid #999;
  background: linear-gradient(#f2f2f2, #b8b8b8);
}
.menubar a {
  font: 14px/25px "Noto Sans", sans-serif;
  color: #1e1e1e;
  text-decoration: none;
}

/* toolbars */
.toolbars {
  display: flex;
  flex-direction: column;
  align-items: flex-start;
  padding-top: 1px;
}
.toolbar {
  display: flex;
  align-items: center;
  height: 35px;
  padding-left: 3px;
  border: solid var(--line);
  border-width: 0 1px 1px 0;
  background: var(--face);
}
.toolbar.second {
  border-bottom: none;
}
.tool {
  display: flex;
  justify-content: center;
  align-items: center;
  width: 38px;
  height: 33px;
}
.tool svg {
  width: 24px;
  height: 24px;
}
.tool.gap {
  margin-left: 8px;
}
.tool.active {
  border: 1px solid var(--line);
  border-bottom-color: #fff;
  background: #f8f8f8;
}
.icon-mark {
  font: bold 16px "Liberation Serif", serif;
}
.icon-mark.off {
  fill: #999;
}
.combo {
  position: relative;
  display: block;
  width: 120px;
  height: 24px;
  border: 1px solid #7a7a7a;
  background: #fff;
}
.combo select {
  width: 100%;
  height: 100%;
  padding-left: 2px;
  border: none;
  background: transparent;
  appearance: none;
  outline: none;
}
.combo::after {
  content: "";
  position: absolute;
  right: 7px;
  top: 6px;
  width: 7px;
  height: 7px;
  border: solid #555;
  border-width: 0 1px 1px 0;
  transform: rotate(45deg);
  pointer-events: none;
}
.combo.wide {
  width: 240px;
  border-color: #ccc;
}
.combo.wide select {
  width: 215px;
  height: 18px;
  margin: 2px;
  background: var(--face);
}
.combo.filled {
  border-color: #bbb;
  background: #ccc;
}
.combo.wide::after,
.combo.filled::after {
  border-color: #aaa;
}
.layout-combo {
  display: flex;
  align-items: center;
  width: 238px;
  height: 26px;
}
.layout-combo svg {
  flex: none;
  width: 17px;
  height: 18px;
  margin-left: 6px;
}
.layout-combo select {
  padding-left: 4px;
}

/* object inspector */
.workspace {
  flex: 1;
  display: flex;
  min-height: 0;
}
.inspector {
  display: flex;
  flex-direction: column;
  width: 323px;
  background: var(--face);
  border-top: 1px solid var(--line);
}
.inspector-head {
  display: flex;
  justify-content: space-between;
  align-items: center;
  height: 30px;
  padding-right: 5px;
  border-bottom: 1px solid var(--line);
}
.inspector-head h2 {
  font-size: 14px;
}
.close {
  width: 15px;
  height: 15px;
  line-height: 9px;
  background: #c4c4c4;
}
.inspector-tools {
  display: flex;
  align-items: center;
  height: 34px;
  margin-right: 4px;
  border: solid var(--dark);
  border-width: 1px 1px 0 0;
}
.inspector-tools button {
  width: 29px;
}
.inspector-tools .find {
  margin-left: 16px;
}
.inspector-tools .help {
  margin-left: 8px;
}
.inspector-tools svg {
  display: block;
  width: 16px;
  height: 16px;
  margin: auto;
}
.tree {
  position: relative;
  height: 516px;
  margin-right: 4px;
  padding: 4px 0 0 6px;
  line-height: 20px;
  border: solid var(--dark);
  border-width: 1px 0 0 1px;
  background: #fff;
}
.tree > ul {
  padding-left: 31px;
}
.tree ul ul {
  padding-left: 39px;
}
.tree-lines {
  position: absolute;
  left: -1px;
  top: 18px;
}
.tree-lines .dots {
  fill: none;
  stroke: #000;
  stroke-dasharray: 1 1;
}
.tree-lines .box {
  fill: #fff;
  stroke: #000;
}
.tree-lines .sign {
  stroke: #000;
}
.tabs {
  display: flex;
  gap: 6px;
  height: 22px;
  margin-top: 10px;
  padding-left: 2px;
  border-top: 1px solid #000;
}
.tab {
  position: relative;
  z-index: 0;
  height: 21px;
  padding: 0 5px;
  font: 14px/20px "Noto Sans", sans-serif;
}
.tab::before {
  content: "";
  position: absolute;
  inset: 0 -3px;
  z-index: -1;
  border: solid #000;
  border-width: 0 1px 1px 0;
  border-bottom-color: var(--line);
  transform: skewX(-15deg);
}
.tab.current {
  font-weight: bold;
}
.tab.current::before {
  background: #fff;
}
.properties {
  flex: 1;
  display: flex;
  align-items: stretch;
  margin: 5px 5px 0 0;
  border-top: 1px solid var(--dark);
}
.properties table {
  flex: 1;
  align-self: flex-start;
  table-layout: fixed;
  border-collapse: collapse;
}
.properties th {
  height: 22px;
  font-weight: normal;
  border: solid var(--dark);
  border-width: 0 1px 1px 0;
  background: #c0c0c0;
}
.properties th:nth-child(-n+2) {
  width: 105px;
}
.side-strip {
  width: 19px;
  background: #a5a5a5;
}

/* structure view */
.viewport {
  position: relative;
  flex: 1;
  border: solid var(--dark);
  border-width: 3px 0 0 3px;
  background: var(--canvas);
}
.canvas {
  display: block;
}
.ruler text {
  font-size: 21px;
  text-anchor: middle;
}
.free-code {
  font: 14px "Noto Sans", sans-serif;
  fill: #801010;
}
.support-code {
  font: 16px "DejaVu Sans", sans-serif;
  fill: #104888;
}
.marker {
  fill: #ff0;
  fill-rule: evenodd;
  mix-blend-mode: multiply;
  pointer-events: none;
}
.corner-panel {
  position: absolute;
  left: 0;
  bottom: 0;
  display: flex;
  justify-content: flex-end;
  width: 160px;
  height: 14px;
  border: 2px solid #e4e4e8;
  border-right-color: #8890a0;
  border-bottom: none;
  overflow: hidden;
}
.corner-panel button {
  width: 32px;
  height: 16px;
  border: 2px solid #e8e8e8;
}

/* display dialog */
.dialog {
  position: absolute;
  left: 190px;
  top: 177px;
  z-index: 3;
  width: 729px;
  border: 1px solid #8c8c8c;
  background: var(--face);
  box-shadow: 2px 4px 12px rgba(0, 0, 0, 0.4);
}
.dialog-head {
  display: flex;
  align-items: center;
  height: 37px;
  padding-left: 9px;
  background: #fff;
}
.dialog-head h2 {
  flex: 1;
  font: 15px/34px "Noto Sans", sans-serif;
  color: #999;
}
.dialog-head button {
  width: 58px;
  line-height: 12px;
}
.template-row {
  display: flex;
  align-items: center;
  gap: 8px;
  height: 41px;
  padding: 0 4px 9px 3px;
}
.template-row label {
  width: 72px;
  padding-top: 8px;
}
.template-row .combo {
  flex: 1;
}
.icon-button {
  display: flex;
  justify-content: center;
  align-items: center;
  width: 34px;
  height: 24px;
  border: 1px solid #adadad;
  background: #ece9d8;
  box-shadow: inset 0 0 0 2px #e1e1e1;
}
.icon-button:disabled {
  background: #ccc;
  box-shadow: none;
}
.icon-button svg {
  width: 18px;
  height: 18px;
}
.template-row .icon-button {
  margin-top: 2px;
}
.panes {
  display: grid;
  grid-template-columns: 232px 1fr;
  gap: 6px;
  padding: 0 3px;
}
.pane {
  border: 2px solid;
  border-color: var(--dark) #e3e3e3 #e3e3e3 var(--dark);
}
.list-pane {
  display: flex;
  flex-direction: column;
}
.categories {
  flex: 1;
  line-height: 16px;
  background: #fff;
}
.categories li {
  padding-left: 2px;
}
.categories .selected {
  color: #fff;
  background: #0078d7;
}
.list-buttons {
  display: flex;
  gap: 11px;
  padding: 0 0 3px 2px;
}
.list-buttons .icon-button {
  height: 28px;
  border-top: none;
}
.list-buttons svg {
  width: 28px;
  height: 24px;
}
.table-pane {
  padding: 1px 0 19px 5px;
}
.attributes {
  width: 390px;
  table-layout: fixed;
  border-collapse: collapse;
}
.c-box {
  width: 17px;
}
.c-check {
  width: 45px;
}
.attributes th {
  height: 23px;
  font-weight: normal;
  border: 1px solid #ddd;
  border-top-color: var(--line);
  border-bottom-color: var(--line);
  background: #fff;
}
.attributes th:nth-child(3) {
  padding-right: 20px;
}
.attributes td {
  height: 22px;
  padding: 0 3px;
  line-height: 20px;
  border: 1px solid var(--line);
  background: #fff;
}
.attributes .parent td {
  background: var(--parent);
}
.attributes .child td {
  background: var(--child);
}
.attributes tr td:first-child,
.attributes .child td:nth-child(2) {
  padding: 0;
  border-color: var(--face);
  border-style: none;
  background: var(--face);
}
.attributes td:nth-last-child(-n+2) {
  padding: 0;
  text-align: center;
}
.attributes td svg {
  display: block;
  width: 20px;
  height: 20px;
  margin: auto;
}
.expander {
  display: block;
  width: 17px;
  height: 17px;
  border: 1px solid #000;
  font-size: 22px;
  line-height: 14px;
  background: #fff;
}
input[type=checkbox] {
  position: relative;
  flex: none;
  width: 16px;
  height: 16px;
  border: 1px solid #333;
  background: #fff;
  appearance: none;
}
.attributes input {
  display: block;
  margin: auto;
}
input:checked::before {
  content: "";
  position: absolute;
  left: 4px;
  top: 1px;
  width: 6px;
  height: 9px;
  border: solid #333;
  border-width: 0 1px 1px 0;
  transform: rotate(42deg);
}
.partial::before {
  content: "";
  position: absolute;
  left: 3px;
  top: 3px;
  width: 8px;
  height: 8px;
  background: #333;
}
.options {
  display: flex;
  align-items: center;
  height: 48px;
  padding: 0 12px 2px 38px;
}
.spinner {
  display: flex;
  width: 81px;
  height: 22px;
  margin-left: 24px;
  border: 1px solid #abadb3;
  background: #fff;
}
.spinner input {
  flex: 1;
  width: 0;
  padding-left: 2px;
  border: none;
}
.steps {
  display: flex;
  flex-direction: column;
  width: 16px;
}
.steps button {
  flex: 1;
  line-height: 4px;
  border: 1px solid #adadad;
  background: #e8e8e8;
}
.only-selected {
  display: flex;
  align-items: center;
  gap: 4px;
  width: 240px;
  margin-left: auto;
  padding-top: 6px;
  line-height: 15px;
}
.actions {
  display: flex;
  gap: 10px;
  padding: 14px 18px 8px 17px;
}
.actions button {
  width: 91px;
  height: 26px;
  border: 1px solid #adadad;
  background: #e1e1e1;
}
.actions .default {
  margin-left: auto;
  border: 2px solid #0078d7;
}
.dialog-marker {
  position: absolute;
  left: 0;
  top: 0;
  overflow: visible;
}
.icon-code {
  font: bold 7px "Liberation Mono", monospace;
}
.icon-num {
  font: bold 9px "Liberation Sans", sans-serif;
}
.icon-help {
  font: bold 13px "Liberation Sans", sans-serif;
  fill: #fff;
}
```
